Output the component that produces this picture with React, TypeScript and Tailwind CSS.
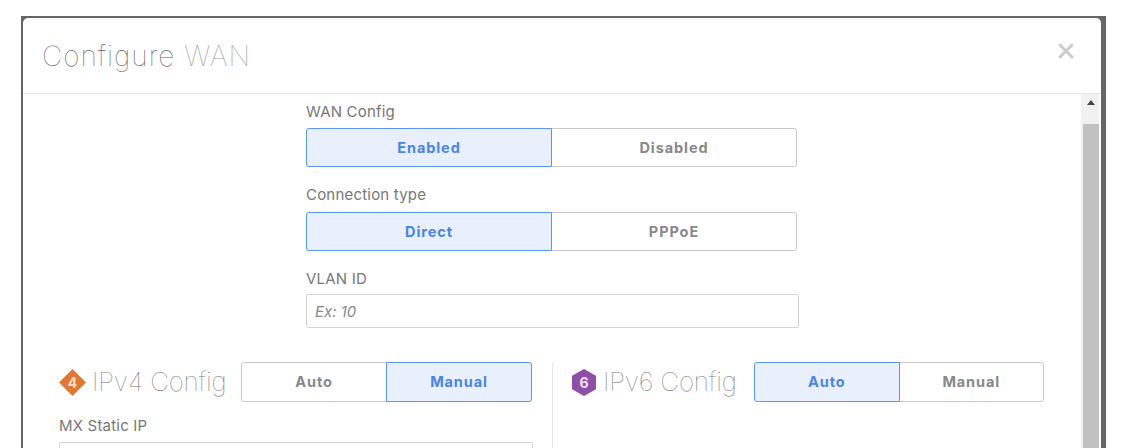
import React from 'react';
import { X } from 'lucide-react';

const sans = "font-['Inter','Liberation_Sans',sans-serif]";
const labelClass = 'block text-[15px] leading-5 tracking-[0.2px] text-[#777777]';

function Segmented({ options, active, className }: { options: string[]; active: number; className: string }) {
    return (
        <div className={`flex ${className}`}>
            {options.map((option, i) => (
                <button
                    key={option}
                    className={
                        'flex-1 text-[14.5px] font-bold tracking-[0.9px] border ' +
                        (i === 0 ? 'rounded-l-[3px] ' : '-ml-px rounded-r-[3px] ') +
                        (i === active
                            ? 'relative bg-[#e8f0fd] border-[#5a97f5] text-[#4a84ea]'
                            : 'bg-white border-[#c8c8c8] text-[#888888]')
                    }
                >
                    {option}
                </button>
            ))}
        </div>
    );
}

function Heading({ text }: { text: string }) {
    return <span className="text-[26px] leading-8 font-thin text-[#777777] tracking-[-0.2px]">{text}</span>;
}

export default function App() {
    return (
        <div className={`h-[448px] w-[1122px] overflow-hidden bg-white pt-4 pl-[21px] ${sans}`}>
            <div className="h-[440px] w-[1085px] bg-[#666666] pt-[2px] pl-[2px] pr-[5px]">
                <div className="h-full rounded-t-[5px] bg-white">
                    <div className="flex h-[76px] items-center justify-between border-b border-[#e6e6e6] pl-[19px] pr-[23px]">
                        <h1 className="text-[28px] font-thin text-[#666666] tracking-[1px]">
                            Configure <span className="text-[#999999]">WAN</span>
                        </h1>
                        <X className="mb-[10px] h-6 w-6 text-[#cccccc]" strokeWidth={3} />
                    </div>

                    <div className="flex h-[360px] pr-[2px]">
                        <div className="flex-1 overflow-hidden">
                            <div className="ml-[283px] w-[493px] pt-[8px]">
                                <label className={labelClass}>WAN Config</label>
                                <Segmented className="mt-[6px] h-[39px] w-[491px]" options={['Enabled', 'Disabled']} active={0} />
                                <label className={`mt-[18px] ${labelClass}`}>Connection type</label>
                                <Segmented className="mt-[7px] h-[39px] w-[491px]" options={['Direct', 'PPPoE']} active={0} />
                                <label className={`mt-[18px] ${labelClass}`}>VLAN ID</label>
                                <input
                                    placeholder="Ex: 10"
                                    className="mt-[5px] block h-[34px] w-[493px] rounded-[2px] border border-[#d4d4d4] px-2 text-[15px] italic placeholder:text-[#888888]"
                                />
                            </div>

                            <div className="mt-[34px] flex">
                                <div className="ml-[36px] w-[474px]">
                                    <div className="flex h-[40px] items-center">
                                        <svg viewBox="0 0 27 27" className="h-[27px] w-[27px]">
                                            <path d="M13.5 0 27 13.5 13.5 27 0 13.5Z" fill="#e5762f" />
                                            <text x="13.5" y="18.5" textAnchor="middle" fontSize="14" fontWeight="700" fill="#f6e3d6">4</text>
                                        </svg>
                                        <span className="ml-[6px] w-[149px]"><Heading text="IPv4 Config" /></span>
                                        <Segmented className="h-[40px] w-[291px]" options={['Auto', 'Manual']} active={1} />
                                    </div>
                                    <label className={`mt-[14px] ${labelClass}`}>MX Static IP</label>
                                    <input className="mt-[6px] block h-[34px] w-[474px] rounded-[2px] border border-[#d4d4d4]" />
                                </div>
                                <div className="ml-[19px] h-[90px] border-l border-[#e8e8e8] pl-[19px]">
                                    <div className="flex h-[40px] items-center">
                                        <svg viewBox="0 0 24 27" className="h-[27px] w-[24px]">
                                            <path d="M12 0 24 6.75V20.25L12 27 0 20.25V6.75Z" fill="#8f4fa8" />
                                            <text x="12" y="18.5" textAnchor="middle" fontSize="14" fontWeight="700" fill="#efe3f3">6</text>
                                        </svg>
                                        <span className="ml-[7px] w-[151px]"><Heading text="IPv6 Config" /></span>
                                        <Segmented className="h-[40px] w-[290px]" options={['Auto', 'Manual']} active={0} />
                                    </div>
                                </div>
                            </div>
                        </div>

                        <div className="flex w-[18px] flex-col items-end bg-[#f1f1f1]">
                            <div className="flex h-[17px] w-full items-center justify-center pl-[2px]">
                                <div className="h-0 w-0 border-x-[4px] border-b-[5px] border-x-transparent border-b-[#444444]" />
                            </div>
                            <div className="mt-[13px] w-[16px] flex-1 bg-[#c1c1c1]" />
                        </div>
                    </div>
                </div>
            </div>
        </div>
    );
}
